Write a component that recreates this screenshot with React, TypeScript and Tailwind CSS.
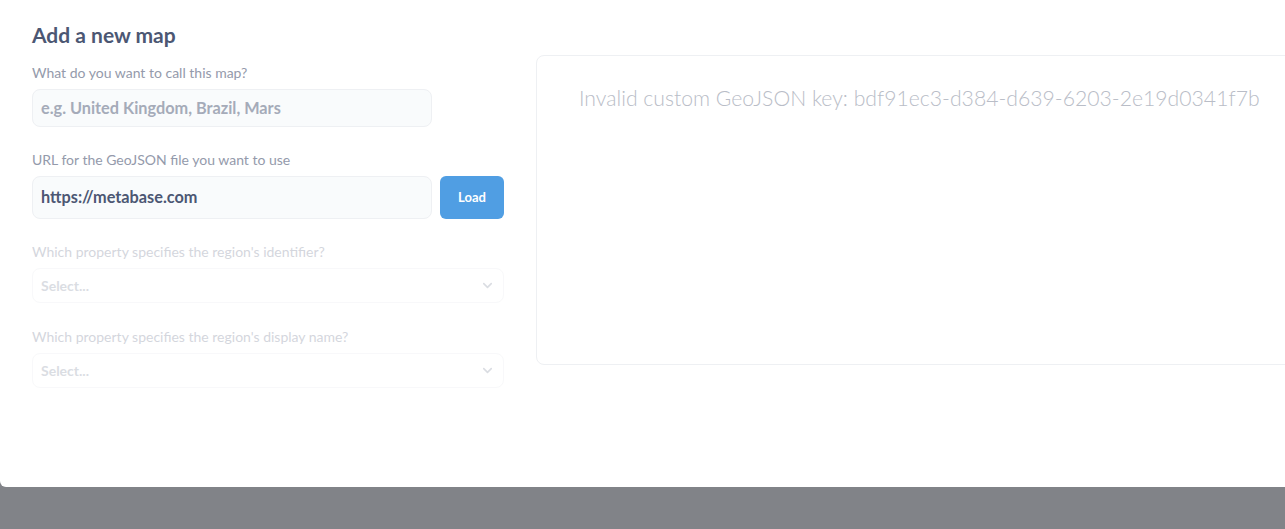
import { ChevronDown } from "lucide-react"

const Label = ({ children }: { children: React.ReactNode }) => (
    <div className="mb-[7px] text-[14px] leading-[18px] text-[#949aab]">
        {children}
    </div>
)

const SelectBox = () => (
    <div className="flex h-[35px] items-center justify-between rounded-lg border border-[#eef0f3] bg-white pr-[8px] pl-[8px]">
        <span className="text-[14px] font-bold text-[#a5abb9]">Select...</span>
        <ChevronDown className="h-[15px] w-[15px] text-[#a5abb9]" strokeWidth={2.5} />
    </div>
)

const App = () => {
    return (
        <main
            className="h-[529px] w-full overflow-hidden bg-[#818388]"
            style={{ fontFamily: "Lato, 'Open Sans', sans-serif" }}
        >
            <div className="flex h-[487px] w-[1340px] gap-[32px] rounded-bl-md bg-white pl-[32px] pt-[21px]">
                <section className="flex w-[472px] flex-col">
                    <h1 className="mb-[15px] text-[21px] leading-[28px] font-bold text-[#4c5773]">
                        Add a new map
                    </h1>

                    <Label>What do you want to call this map?</Label>
                    <div className="flex h-[38px] w-[400px] items-center rounded-lg border border-[#eef0f3] bg-[#f9fbfc] px-[8px]">
                        <span className="text-[16.3px] font-bold text-[#a5abb9]">
                            e.g. United Kingdom, Brazil, Mars
                        </span>
                    </div>

                    <div className="mt-[24px]">
                        <Label>URL for the GeoJSON file you want to use</Label>
                    </div>
                    <div className="flex gap-[8px]">
                        <div className="flex h-[43px] w-[400px] items-center rounded-lg border border-[#eef0f3] bg-[#f9fbfc] px-[8px]">
                            <span className="text-[16.3px] font-bold text-[#4c5773]">
                                https://metabase.com
                            </span>
                        </div>
                        <button className="h-[43px] w-[64px] rounded-md bg-[#509ee3] text-[13px] font-bold text-white">
                            Load
                        </button>
                    </div>

                    <div className="mt-[24px] opacity-40">
                        <Label>Which property specifies the region's identifier?</Label>
                        <SelectBox />
                        <div className="mt-[25px]">
                            <Label>Which property specifies the region's display name?</Label>
                        </div>
                        <SelectBox />
                    </div>
                </section>

                <section className="mt-[34px] h-[310px] flex-1 rounded-lg border border-[#eef0f3] pl-[42px] pt-[27px]">
                    <p className="text-[21.2px] font-light text-[#b9bdc7]">
                        Invalid custom GeoJSON key: bdf91ec3-d384-d639-6203-2e19d0341f7b
                    </p>
                </section>
            </div>
        </main>
    )
}

export default App
